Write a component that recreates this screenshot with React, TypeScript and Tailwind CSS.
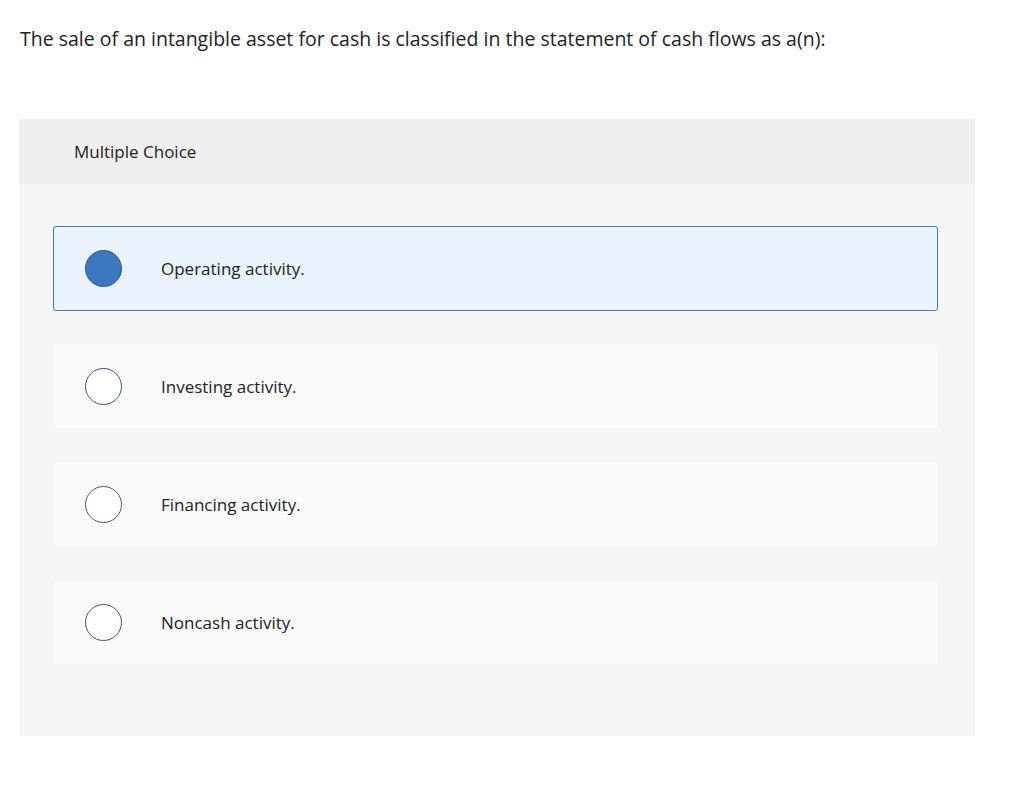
import React from 'react';

const options = [
  { label: "Operating activity.", selected: true },
  { label: "Investing activity.", selected: false },
  { label: "Financing activity.", selected: false },
  { label: "Noncash activity.", selected: false },
];

export default function App() {
  return (
    <div className="min-h-[785px] bg-white text-[#222] font-['Open_Sans',sans-serif]">
      <div className="pl-[20px] pt-[26px]">
        <p className="text-[19.5px] leading-[26px]">
          The sale of an intangible asset for cash is classified in the statement of cash flows as a(n):
        </p>
      </div>

      <div className="ml-[19px] mt-[67px] w-[956px] bg-[#f5f5f5] rounded-[2px]">
        <div className="h-[65px] bg-[#efefef] flex items-center pl-[55px]">
          <span className="text-[17px] text-[#222]">Multiple Choice</span>
        </div>
        <div className="pl-[34px] pr-[37px] pt-[42px] pb-[71px] flex flex-col gap-[33px]">
          {options.map((opt, i) => (
            <div
              key={i}
              className={
                opt.selected
                  ? "h-[85px] flex items-center pl-[31px] rounded-[3px] border border-[#4d7aa6] bg-[#eaf3fc]"
                  : "h-[85px] flex items-center pl-[31px] rounded-[3px] border border-[#f7f7f7] bg-[#fafafa]"
              }
            >
              {opt.selected ? (
                <div className="w-[37px] h-[37px] shrink-0 rounded-full bg-[#3b78bf] border border-[#2c5b8f]" />
              ) : (
                <div className="w-[37px] h-[37px] shrink-0 rounded-full bg-white border-[1.5px] border-[#3d5874]" />
              )}
              <span className="ml-[39px] pt-[1px] text-[17px] text-[#222]">{opt.label}</span>
            </div>
          ))}
        </div>
      </div>
    </div>
  );
}
